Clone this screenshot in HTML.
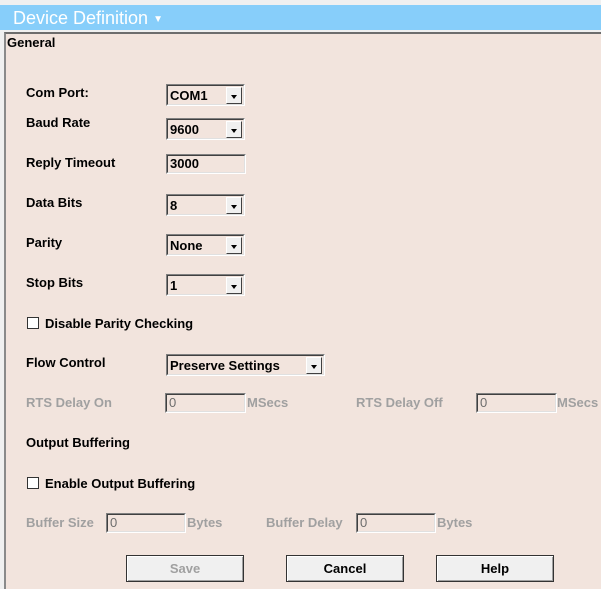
<!DOCTYPE html>
<html><head><style>
*{margin:0;padding:0;box-sizing:border-box}
body{width:601px;height:589px;background:#f0f0f0;position:relative;overflow:hidden;font-family:"Liberation Sans",Arial,sans-serif;font-weight:bold;font-size:13px;color:#000}
.hdr{position:absolute;left:0;top:5px;width:601px;height:25px;background:#87cefa;color:#fff;font-weight:normal;font-size:18px;padding-left:13px;line-height:26px}
.panel{position:absolute;left:4px;top:32px;width:597px;height:557px;background:#f2e4dd;border-top:2px solid #6d6d6d;border-left:2px solid #8a8a8a}
.a{position:absolute;white-space:nowrap}
.g{color:#a0a0a0}
.box{position:absolute;height:21px;border:1px solid;border-color:#808080 #fff #fff #808080;padding-left:3px;line-height:18px}
.box::before{content:"";position:absolute;left:0;top:0;right:0;bottom:0;border:1px solid;border-color:#404040 #e0e0e0 #e0e0e0 #404040;pointer-events:none}
.combo{height:22px;line-height:21px}
.dd{position:absolute;right:2px;top:2px;width:16px;height:17px;background:#f0f0f0;border:1px solid;border-color:#fff #404040 #404040 #fff}
.dd::after{content:"";position:absolute;left:4px;top:7px;border-left:3.5px solid transparent;border-right:3.5px solid transparent;border-top:4px solid #000}
.dis{color:#6d6d6d;font-weight:normal}
.cb{position:absolute;width:12px;height:12px;background:#fff;border:1px solid #333}
.btn{position:absolute;top:555px;width:118px;height:27px;background:#f0f0f0;border:1px solid #333;box-shadow:inset 1px 1px #fff,inset -1px -1px #a0a0a0;text-align:center;line-height:25px}
</style></head><body>
<div class="hdr">Device Definition <span style="font-size:10px;position:relative;top:-2px">▼</span></div>
<div class="panel"></div>
<div class="a" style="left:7px;top:35px">General</div>

<div class="a" style="left:26px;top:85px">Com Port:</div>
<div class="box combo" style="left:166px;top:84px;width:79px">COM1<div class="dd"></div></div>
<div class="a" style="left:26px;top:115px">Baud Rate</div>
<div class="box combo" style="left:166px;top:118px;width:79px">9600<div class="dd"></div></div>
<div class="a" style="left:26px;top:155px">Reply Timeout</div>
<div class="box" style="left:166px;top:154px;width:80px;height:20px">3000</div>
<div class="a" style="left:26px;top:195px">Data Bits</div>
<div class="box combo" style="left:166px;top:194px;width:79px">8<div class="dd"></div></div>
<div class="a" style="left:26px;top:235px">Parity</div>
<div class="box combo" style="left:166px;top:234px;width:79px">None<div class="dd"></div></div>
<div class="a" style="left:26px;top:275px">Stop Bits</div>
<div class="box combo" style="left:166px;top:274px;width:79px">1<div class="dd"></div></div>

<div class="cb" style="left:27px;top:317px"></div>
<div class="a" style="left:45px;top:316px">Disable Parity Checking</div>

<div class="a" style="left:26px;top:355px">Flow Control</div>
<div class="box combo" style="left:166px;top:354px;width:159px">Preserve Settings<div class="dd"></div></div>

<div class="a g" style="left:26px;top:395px">RTS Delay On</div>
<div class="box dis" style="left:165px;top:393px;width:81px;height:20px">0</div>
<div class="a g" style="left:247px;top:395px">MSecs</div>
<div class="a g" style="left:356px;top:395px">RTS Delay Off</div>
<div class="box dis" style="left:476px;top:393px;width:81px;height:20px">0</div>
<div class="a g" style="left:557px;top:395px">MSecs</div>

<div class="a" style="left:26px;top:435px">Output Buffering</div>
<div class="cb" style="left:27px;top:477px"></div>
<div class="a" style="left:45px;top:476px">Enable Output Buffering</div>

<div class="a g" style="left:26px;top:515px">Buffer Size</div>
<div class="box dis" style="left:106px;top:513px;width:80px;height:20px">0</div>
<div class="a g" style="left:187px;top:515px">Bytes</div>
<div class="a g" style="left:266px;top:515px">Buffer Delay</div>
<div class="box dis" style="left:356px;top:513px;width:80px;height:20px">0</div>
<div class="a g" style="left:437px;top:515px">Bytes</div>

<div class="btn g" style="left:126px">Save</div>
<div class="btn" style="left:286px">Cancel</div>
<div class="btn" style="left:436px">Help</div>
</body></html>
